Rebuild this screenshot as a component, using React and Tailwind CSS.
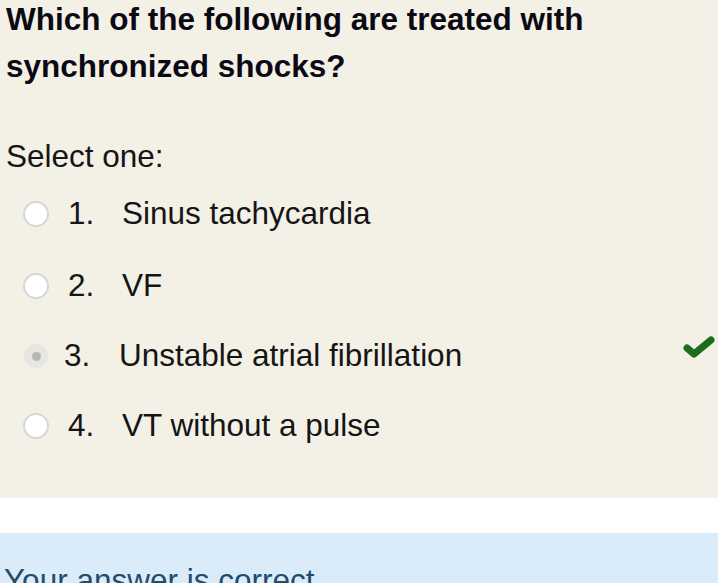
export default function App() {
  const opts = [
    { n: "1.", t: "Sinus tachycardia" },
    { n: "2.", t: "VF" },
    { n: "3.", t: "Unstable atrial fibrillation", checked: true },
    { n: "4.", t: "VT without a pulse" },
  ];
  return (
    <div className="w-[718px] h-[583px] overflow-hidden bg-white" style={{ fontFamily: '"Liberation Sans", Arial, sans-serif' }}>
      <div className="bg-[#f3f0e6] h-[498px] pl-[6px] flex flex-col">
        <div className="-mt-[4px] text-[31.5px] font-bold leading-[47px] text-[#0b0a14] pr-[100px]">
          Which of the following are treated with synchronized shocks?
        </div>
        <div className="mt-[48px] text-[31.5px] leading-[36px] text-[#151515]">Select one:</div>
        <div className="mt-[5px] flex flex-col">
          {opts.map((o, i) => (
            <div key={i} className={(i === 0 ? "h-[72px] pb-[2px] " : "h-[70px] ") + "flex items-center text-[31.5px] text-[#151515] pr-[2px]"}>
              <div className="w-[58px] flex justify-center pl-[2px]">
                {o.checked ? (
                  <div className="w-[24px] h-[24px] rounded-full bg-[#e8e6e1] flex items-center justify-center">
                    <div className="w-[9px] h-[9px] rounded-full bg-[#b7b7b7]" />
                  </div>
                ) : (
                  <div className="w-[26px] h-[26px] rounded-full bg-white border-[2px] border-[#d6d6d6]" />
                )}
              </div>
              <span className={o.checked ? "w-[55px]" : "w-[54px] ml-[4px]"}>{o.n}</span>
              <span className="flex-1">{o.t}</span>
              {o.checked && (
                <svg width="34" height="26" viewBox="0 0 34 26" className="-mt-[16px]">
                  <path d="M5 13 L12 19 L29 5" fill="none" stroke="#1b6c1d" strokeWidth="7" strokeLinejoin="round" strokeLinecap="round" />
                </svg>
              )}
            </div>
          ))}
        </div>
      </div>
      <div className="h-[35px] bg-white" />
      <div className="bg-[#daecf9] h-[60px] pl-[4px] pt-[29px] text-[31.5px] leading-[36px] text-[#1f4d6e]">
        Your answer is correct.
      </div>
    </div>
  );
}
